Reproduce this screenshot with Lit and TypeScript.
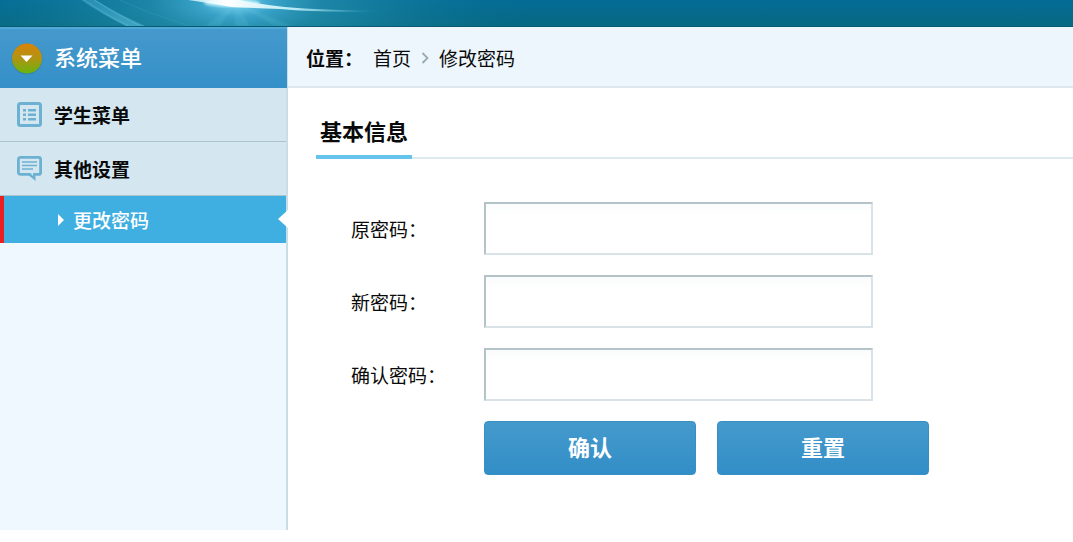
import { LitElement, html, css, svg } from "lit";
import { customElement } from "lit/decorators.js";

const listIcon = svg`
  <rect x="1.5" y="1.5" width="22" height="22" rx="2" fill="none" stroke="#6db1d2" stroke-width="3"/>
  <path d="M6 7h3v2.5H6zM11 7h8v2.5h-8zM6 11.5h3V14H6zM11 11.5h8V14h-8zM6 16h3v2.5H6zM11 16h8v2.5h-8z" fill="#6db1d2"/>`;

const chatIcon = svg`
  <rect x="1.400" y="1.400" width="22.200" height="17" rx="2" fill="none" stroke="#6db1d2" stroke-width="2.800"/>
  <path d="M10 18H18.500V25Z" fill="#6db1d2"/>
  <path d="M13 16.500H16V20Z" fill="#d4e7f0"/>
  <path d="M5 6h15M5 9.500h15M5 13h11" stroke="#6db1d2" stroke-width="1.500"/>`;

@customElement("app-root")
export class AppRoot extends LitElement {
  static styles = css`
    :host {
      display: flex;
      flex-direction: column;
      box-sizing: border-box;
      min-height: 100vh;
      padding-bottom: 12px;
      background: #fff;
      color: #0a0a0a;
      font: 19px/28px "Noto Sans CJK SC", sans-serif;
    }
    * { box-sizing: border-box; }
    a { color: inherit; text-decoration: none; }
    svg { display: block; flex: none; }
    .banner {
      height: 27px;
      overflow: hidden;
      background: linear-gradient(#046b96, #076a82);
      border-bottom: 1px solid #0a5b70;
    }
    .body { flex: 1; display: flex; }
    .side {
      width: 288px;
      flex: none;
      background: #f0f8ff;
      border-right: 2px solid #c9dde6;
    }
    .side-title {
      display: flex;
      align-items: center;
      gap: 11px;
      height: 61px;
      margin: 0 -1px 0 0;
      padding-left: 11px;
      border-top: 2px solid #4faad9;
      background: linear-gradient(#4599cc, #3490c8);
      color: #fff;
      font-size: 22px;
      font-weight: 500;
    }
    .side-title span { padding-bottom: 5px; }
    .group {
      display: flex;
      align-items: center;
      gap: 12px;
      height: 54px;
      margin: 0;
      padding-left: 17px;
      background: #d4e7f0;
      border-bottom: 1px solid #a9c3cf;
      font-size: 19px;
      font-weight: 700;
    }
    .active {
      position: relative;
      display: flex;
      align-items: center;
      gap: 9px;
      height: 47px;
      padding-left: 54px;
      border-left: 4px solid #ea2020;
      background: #3faee1;
      color: #fff;
      font-weight: 500;
    }
    .notch { position: absolute; right: -2px; top: 14px; }
    .main { flex: 1; min-width: 0; }
    .crumbs {
      display: flex;
      align-items: center;
      height: 61px;
      padding: 2px 0 0 18px;
      background: #edf6fc;
      border-bottom: 2px solid #dce8ed;
    }
    .crumbs b { margin-right: 10px; }
    .crumbs svg { margin: 0 10px; }
    .tabs {
      display: flex;
      margin: 18px 0 0 28px;
      border-bottom: 2px solid #dce9ee;
    }
    .tab {
      margin: 0 0 -2px;
      padding: 9px 4px 10px;
      border-bottom: 4px solid #66c3ec;
      font-size: 22px;
      line-height: 30px;
      font-weight: 700;
    }
    form {
      display: grid;
      grid-template-columns: 133px minmax(0, 389px);
      row-gap: 20px;
      align-items: center;
      margin: 43px 28px 28px 63px;
    }
    input {
      width: 100%;
      height: 53px;
      padding: 0 12px;
      border: 2px solid #d8e2e7;
      border-top-color: #b5c2c8;
      border-left-color: #b5c2c8;
      background: linear-gradient(#fafbfc, #fff 12px);
      font: inherit;
    }
    .actions { grid-column: 2; display: flex; gap: 21px; }
    button {
      flex: none;
      width: 212px;
      height: 54px;
      padding: 0 0 4px;
      border: 1px solid #388fc3;
      border-radius: 4px;
      background: linear-gradient(#459acc, #328ec7);
      color: #fff;
      font: inherit;
      font-size: 22px;
      font-weight: 700;
    }
  `;

  render() {
    return html`
      <header class="banner">
        <svg width="700" height="26" viewBox="0 0 700 26" aria-hidden="true">
          <defs>
            <radialGradient id="glow" gradientUnits="userSpaceOnUse" cx="0" cy="0" r="1" gradientTransform="translate(236 3) scale(290 110)">
              <stop offset="0" stop-color="#7fd8f4"/>
              <stop offset=".13" stop-color="#3da7cd" stop-opacity=".9"/>
              <stop offset=".3" stop-color="#258fad" stop-opacity=".75"/>
              <stop offset="1" stop-color="#087093" stop-opacity="0"/>
            </radialGradient>
            <linearGradient id="beam" x1="0" x2="1">
              <stop offset="0" stop-color="#e4faff" stop-opacity=".7"/>
              <stop offset=".2" stop-color="#fff"/>
              <stop offset=".55" stop-color="#b4e9f5"/>
              <stop offset="1" stop-color="#3aa8c8" stop-opacity="0"/>
            </linearGradient>
            <linearGradient id="streak" x1="0" y1="0" x2="1" y2="1">
              <stop offset="0" stop-color="#2a90b8"/>
              <stop offset="1" stop-color="#45acc9"/>
            </linearGradient>
            <filter id="soft"><feGaussianBlur stdDeviation="1"/></filter>
          </defs>
          <rect width="700" height="26" fill="url(#glow)"/>
          <path d="M81 0H96Q118 14 145 26H126Q103 15 81 0Z" fill="url(#streak)" opacity=".85"/>
          <path d="M84 0Q104 14 129 26M94 0Q114 13 140 26" fill="none" stroke="#65bfd7" opacity=".45"/>
          <path d="M120 0Q150 14 190 26" fill="none" stroke="#43a5c3" opacity=".3"/>
          <path d="M236 3L205 26H220ZM236 3L235 26H250ZM236 3L275 26H292Z" fill="#76d1e8" opacity=".15" filter="url(#soft)"/>
          <ellipse cx="232" cy="3" rx="28" ry="4" fill="#c4f3fd" opacity=".85" filter="url(#soft)"/>
          <path d="M188 0H240Q262 5 285 7Q320 10 385 11Q325 13 280 9Q250 8 232 7Q210 3 188 0Z" fill="url(#beam)"/>
        </svg>
      </header>
      <div class="body">
        <nav class="side">
          <h2 class="side-title">
            <svg width="32" height="32" viewBox="0 0 32 32" aria-hidden="true">
              <defs>
                <linearGradient id="orb" x1="0" y1="0" x2="0" y2="1">
                  <stop offset="0" stop-color="#d98308"/>
                  <stop offset=".5" stop-color="#b09413"/>
                  <stop offset="1" stop-color="#68b50c"/>
                </linearGradient>
              </defs>
              <circle cx="16" cy="16" r="15.500" fill="#38799b" opacity=".6"/>
              <circle cx="16" cy="15.500" r="15" fill="url(#orb)"/>
              <path d="M9.500 12.500H21.500L15.500 19Z" fill="#fff"/>
            </svg>
            <span>系统菜单</span>
          </h2>
          <h3 class="group"><svg width="25" height="25" viewBox="0 0 25 25" aria-hidden="true">${listIcon}</svg>学生菜单</h3>
          <h3 class="group"><svg width="25" height="25" viewBox="0 0 25 25" aria-hidden="true">${chatIcon}</svg>其他设置</h3>
          <a class="active" href="#password" aria-current="page">
            <svg width="6" height="12" viewBox="0 0 6 12" aria-hidden="true"><path d="M0 0L6 6L0 12Z" fill="#fff"/></svg>
            更改密码
            <svg class="notch" width="10" height="18" viewBox="0 0 10 18" aria-hidden="true"><path d="M10 0V18L0 9Z" fill="#fff"/></svg>
          </a>
        </nav>
        <main class="main">
          <div class="crumbs">
            <b>位置：</b>
            <a href="#home">首页</a>
            <svg width="8" height="12" viewBox="0 0 8 12" aria-hidden="true"><path d="M1.500 1L6.500 6L1.500 11" fill="none" stroke="#9aaab2" stroke-width="1.800"/></svg>
            <a href="#password">修改密码</a>
          </div>
          <div class="tabs"><h1 class="tab">基本信息</h1></div>
          <form @submit=${(e: Event) => e.preventDefault()}>
            <label for="old">原密码：</label><input id="old" type="password" />
            <label for="new">新密码：</label><input id="new" type="password" />
            <label for="again">确认密码：</label><input id="again" type="password" />
            <div class="actions">
              <button type="submit">确认</button>
              <button type="reset">重置</button>
            </div>
          </form>
        </main>
      </div>
    `;
  }
}
